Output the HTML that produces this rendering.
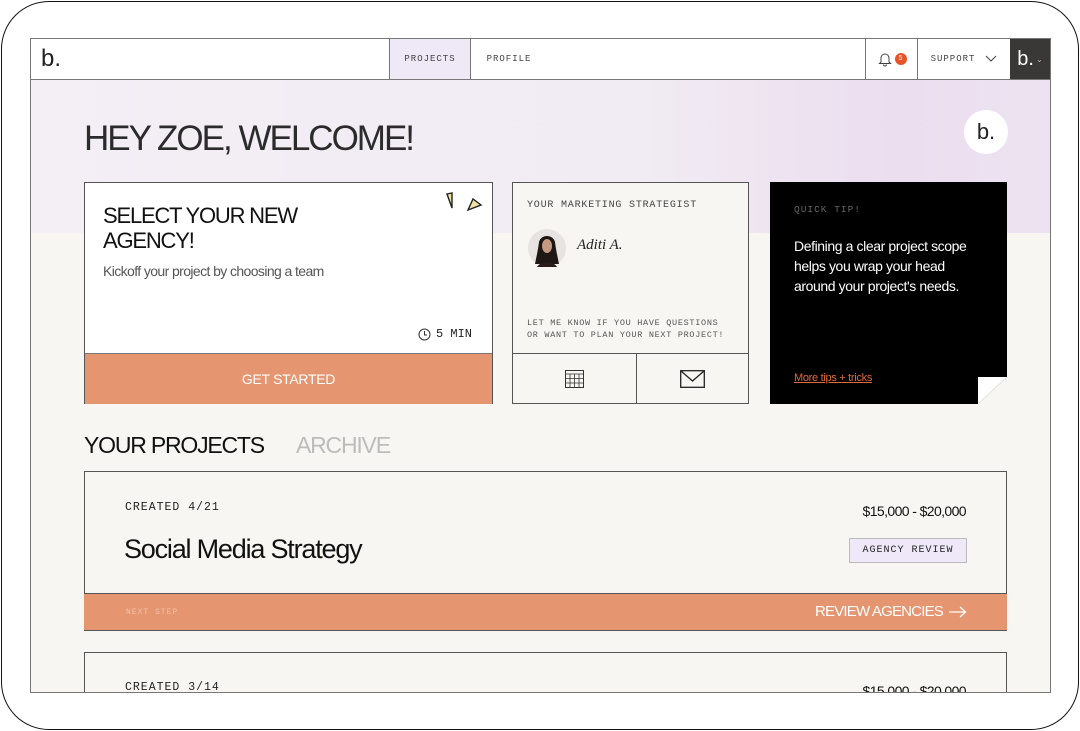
<!DOCTYPE html>
<html><head><meta charset="utf-8"><style>
*{box-sizing:border-box;margin:0;padding:0}
body{width:1080px;height:731px;background:#fff;position:relative;overflow:hidden;font-family:"Liberation Sans",sans-serif;color:#1a1a1a}
.frame{position:absolute;left:1px;top:1px;width:1078px;height:729px;border:1.5px solid #111;border-radius:48px}
.screen{position:absolute;left:30px;top:38px;width:1021px;height:655px;border:1px solid #777;overflow:hidden;background:#f7f6f2}
.mono{font-family:"Liberation Mono",monospace}
.nav{position:absolute;left:0;top:0;width:100%;height:41px;background:#fff;border-bottom:1px solid #777;display:flex}
.nav div{height:40px;display:flex;align-items:center;justify-content:center;font-family:"Liberation Mono",monospace;font-size:9px;letter-spacing:1px;color:#444}
.hero{position:absolute;left:0;top:41px;width:100%;height:153px;background:linear-gradient(90deg,#f3eff5 0%,#f1ebf3 60%,#ebdeef 85%,#ede3f0 100%)}
.card{position:absolute;border:1px solid #555}
</style></head><body>
<div class="frame"></div>
<div class="screen">
 <div class="nav">
  <div style="width:358px;justify-content:flex-start;padding-left:10px;font-family:'Liberation Sans',sans-serif;font-size:24px;letter-spacing:0;color:#222">b.</div>
  <div style="width:82px;background:#efe8f7;border-left:1px solid #777;border-right:1px solid #777">PROJECTS</div>
  <div style="width:76px">PROFILE</div>
  <div style="flex:1"></div>
  <div style="width:53px;border-left:1px solid #777;border-right:1px solid #777;gap:2px">
   <svg width="16" height="16" viewBox="0 0 16 16"><path d="M4 11V7a4 4 0 0 1 8 0v4l1.5 1.5h-11z M6.5 13.5a1.5 1.5 0 0 0 3 0" fill="none" stroke="#444" stroke-width="1"/></svg>
   <span style="width:12px;height:12px;border-radius:50%;background:#e8532a;color:#fff;font-size:7px;display:flex;align-items:center;justify-content:center;letter-spacing:0">5</span>
  </div>
  <div style="width:92px;gap:10px">SUPPORT <svg width="12" height="8" viewBox="0 0 12 8"><path d="M1 1l5 5 5-5" fill="none" stroke="#444"/></svg></div>
  <div style="width:40px;background:#3a3836;color:#fff;font-family:'Liberation Sans',sans-serif;font-size:20px;letter-spacing:0;gap:2px">b.<span style="font-size:8px;color:#bbb">&#8964;</span></div>
 </div>
 <div class="hero"></div>
 <div style="position:absolute;left:53px;top:80px;font-size:35px;letter-spacing:-2px;color:#2b2b2b">HEY ZOE, WELCOME!</div>
 <div style="position:absolute;left:933px;top:71px;width:44px;height:44px;border-radius:50%;background:#fff;display:flex;align-items:center;justify-content:center;font-size:22px;color:#222">b.</div>

 <div class="card" style="left:53px;top:143px;width:409px;height:222px;background:#fff">
  <div style="position:absolute;left:18px;top:20px;font-size:22px;line-height:25px;letter-spacing:-1.2px;color:#111">SELECT YOUR NEW<br>AGENCY!</div>
  <div style="position:absolute;left:18px;top:80px;font-size:14px;letter-spacing:-0.6px;color:#555">Kickoff your project by choosing a team</div>
  <svg style="position:absolute;left:360px;top:8px" width="40" height="22" viewBox="0 0 40 22"><path d="M2 3l5-1 0 15z" fill="#f2e4a6" stroke="#222" stroke-width="1.4"/><path d="M23 19l5-11 8 6z" fill="#f2e4a6" stroke="#222" stroke-width="1.4"/></svg>
  <div style="position:absolute;right:20px;top:144px;display:flex;align-items:center;gap:5px;font-family:'Liberation Mono',monospace;font-size:12px;color:#222"><svg width="13" height="13" viewBox="0 0 13 13"><circle cx="6.5" cy="6.5" r="5.5" fill="none" stroke="#333"/><path d="M6.5 3v4h2.5" fill="none" stroke="#333"/></svg>5 MIN</div>
  <div style="position:absolute;left:0;top:170px;width:100%;height:51px;background:#e5956f;border-top:1px solid #777;display:flex;align-items:center;justify-content:center;color:#fff;font-size:14px;letter-spacing:-0.3px">GET STARTED</div>
 </div>

 <div class="card" style="left:481px;top:143px;width:237px;height:222px;background:#f7f6f2">
  <div class="mono" style="position:absolute;left:14px;top:17px;font-size:10px;letter-spacing:0.8px;color:#444">YOUR MARKETING STRATEGIST</div>
  <svg style="position:absolute;left:14px;top:45px" width="40" height="40" viewBox="0 0 40 40"><circle cx="20" cy="20" r="19" fill="#e6e3e0"/><path d="M8 36c2-10 3-14 4-22 2-8 14-8 16 0 1 8 2 12 4 22z" fill="#1e1713"/><ellipse cx="20" cy="18" rx="5" ry="7" fill="#c49b82"/><path d="M10 39c3-6 17-6 20 0z" fill="#2a1d18"/></svg>
  <div style="position:absolute;left:64px;top:54px;font-family:'Liberation Serif',serif;font-style:italic;font-size:15px;color:#222">Aditi A.</div>
  <div class="mono" style="position:absolute;left:14px;top:134px;font-size:8.5px;line-height:12px;letter-spacing:0.7px;color:#555">LET ME KNOW IF YOU HAVE QUESTIONS<br>OR WANT TO PLAN YOUR NEXT PROJECT!</div>
  <div style="position:absolute;left:0;top:170px;width:100%;height:51px;border-top:1px solid #555;display:flex">
   <div style="width:124px;border-right:1px solid #555;display:flex;align-items:center;justify-content:center"><svg width="19" height="18" viewBox="0 0 19 18"><rect x="0.5" y="0.5" width="18" height="17" fill="none" stroke="#333"/><path d="M0.5 4h18M0.5 8.5h18M0.5 13h18M5 4v14M9.5 4v14M14 4v14" stroke="#333" stroke-width="0.8"/></svg></div>
   <div style="flex:1;display:flex;align-items:center;justify-content:center"><svg width="25" height="18" viewBox="0 0 25 18"><rect x="0.7" y="0.7" width="23.6" height="16.6" fill="none" stroke="#222" stroke-width="1.3"/><path d="M1 1l11.5 10L24 1" fill="none" stroke="#222" stroke-width="1.3"/></svg></div>
  </div>
 </div>

 <div style="position:absolute;left:739px;top:143px;width:237px;height:222px;background:#000">
  <div class="mono" style="position:absolute;left:24px;top:22px;font-size:9.5px;letter-spacing:1px;color:#666">QUICK TIP!</div>
  <div style="position:absolute;left:24px;top:54px;font-size:14px;line-height:20px;letter-spacing:-0.4px;color:#fff">Defining a clear project scope<br>helps you wrap your head<br>around your project's needs.</div>
  <div style="position:absolute;left:24px;top:190px;font-size:11px;letter-spacing:-0.3px;color:#e0693a;text-decoration:underline">More tips + tricks</div>
  <svg style="position:absolute;left:208px;top:195px" width="29" height="27" viewBox="0 0 29 27"><path d="M0 0H29V27H0z" fill="#f7f6f2"/><path d="M0 0H29L0 27z" fill="#fff"/><path d="M29 0L0 27" stroke="#e4e2de" stroke-width="1"/></svg>
 </div>

 <div style="position:absolute;left:53px;top:393px;font-size:23px;letter-spacing:-1.2px;color:#111">YOUR PROJECTS</div>
 <div style="position:absolute;left:265px;top:393px;font-size:23px;letter-spacing:-1.2px;color:#bdbcbc">ARCHIVE</div>

 <div class="card" style="left:53px;top:432px;width:923px;height:160px;background:#f7f6f2">
  <div class="mono" style="position:absolute;left:40px;top:29px;font-size:11.5px;letter-spacing:1px;color:#222">CREATED 4/21</div>
  <div style="position:absolute;right:40px;top:31px;font-size:14px;letter-spacing:-0.6px;color:#111">$15,000 - $20,000</div>
  <div style="position:absolute;left:39px;top:62px;font-size:27px;letter-spacing:-1.2px;color:#111">Social Media Strategy</div>
  <div class="mono" style="position:absolute;right:39px;top:66px;width:118px;height:25px;background:#efe8f8;border:1px solid #bbb;display:flex;align-items:center;justify-content:center;font-size:10px;letter-spacing:1px;color:#222">AGENCY REVIEW</div>
  <div style="position:absolute;left:-1px;top:121px;width:923px;height:38px;background:#e5956f;border-top:1px solid #555;border-bottom:1px solid #555">
   <div class="mono" style="position:absolute;left:42px;top:14px;font-size:8px;letter-spacing:1px;color:#f3c0a6">NEXT STEP</div>
   <div style="position:absolute;right:40px;top:9px;font-size:15px;letter-spacing:-0.8px;color:#fff;display:flex;align-items:center;gap:6px">REVIEW AGENCIES <svg width="18" height="12" viewBox="0 0 18 12"><path d="M0 6h17M11 1l5.5 5-5.5 5" fill="none" stroke="#fff" stroke-width="1.2"/></svg></div>
  </div>
 </div>

 <div class="card" style="left:53px;top:613px;width:923px;height:80px;background:#f7f6f2">
  <div class="mono" style="position:absolute;left:40px;top:28px;font-size:11.5px;letter-spacing:1px;color:#222">CREATED 3/14</div>
  <div style="position:absolute;right:40px;top:30px;font-size:14px;letter-spacing:-0.6px;color:#111">$15,000 - $20,000</div>
 </div>
</div>
</body></html>
